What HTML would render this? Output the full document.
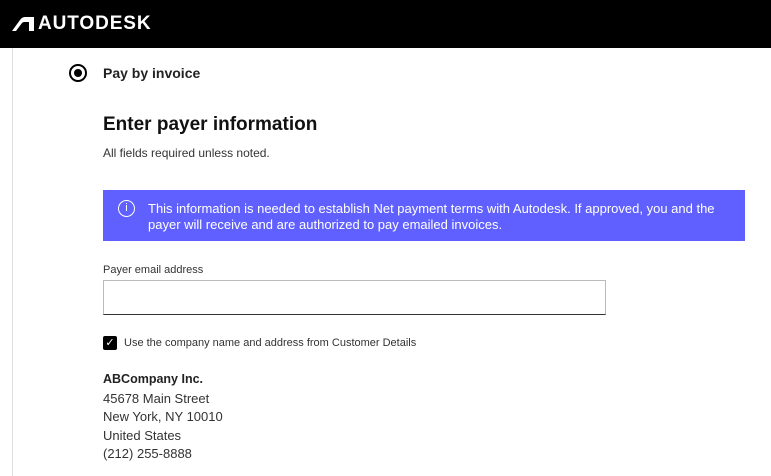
<!DOCTYPE html>
<html><head><style>
body{margin:0;width:771px;height:476px;overflow:hidden;background:#fff;font-family:"Liberation Sans",sans-serif;color:#000;position:relative}
.hdr{position:absolute;left:0;top:0;width:771px;height:48px;background:#000}
.logo{position:absolute;left:38px;top:13px;color:#fff;font-weight:bold;font-size:19px;letter-spacing:0.9px}
.vline{position:absolute;left:12px;top:48px;width:1px;height:428px;background:#ddd}
.t{position:absolute;white-space:nowrap}
</style></head><body>
<div class="hdr"><svg style="position:absolute;left:12px;top:17px" width="22" height="14" viewBox="0 0 22 14"><path d="M0 14 L8 3 Q10 0 13 0 L22 0 L22 14 L17 14 L17 5 L12 5 Q11 5 10 6 L4 14 Z" fill="#fff"/></svg><div class="logo">AUTODESK</div></div>
<div class="vline"></div>
<div style="position:absolute;left:69px;top:64px;width:14px;height:14px;border:2px solid #000;border-radius:50%;box-sizing:content-box"></div>
<div style="position:absolute;left:74px;top:69px;width:8px;height:8px;background:#000;border-radius:50%"></div>
<div class="t" style="left:103px;top:65px;font-size:14px;font-weight:bold;color:#222">Pay by invoice</div>
<div class="t" style="left:103px;top:114px;font-size:19px;font-weight:bold;color:#111">Enter payer information</div>
<div class="t" style="left:103px;top:146px;font-size:12px;color:#333">All fields required unless noted.</div>
<div style="position:absolute;left:103px;top:190px;width:642px;height:51px;background:#5f60ff"></div>
<div style="position:absolute;left:118px;top:200px;width:15px;height:15px;border:1.5px solid #fff;border-radius:50%;color:#fff;font-size:11px;text-align:center;line-height:15px">i</div>
<div class="t" style="left:148px;top:201px;font-size:13px;color:#fff;line-height:15.5px">This information is needed to establish Net payment terms with Autodesk. If approved, you and the<br>payer will receive and are authorized to pay emailed invoices.</div>
<div class="t" style="left:103px;top:264px;font-size:11px;color:#333">Payer email address</div>
<div style="position:absolute;left:103px;top:280px;width:503px;height:35px;box-sizing:border-box;border:1px solid #bbb;border-bottom:1.5px solid #333"></div>
<div style="position:absolute;left:103px;top:336px;width:14px;height:14px;background:#000;border-radius:2px;color:#fff;font-size:11px;line-height:14px;text-align:center">✓</div>
<div class="t" style="left:124px;top:337px;font-size:11px;color:#333">Use the company name and address from Customer Details</div>
<div class="t" style="left:103px;top:372px;font-size:12.5px;font-weight:bold;color:#222">ABCompany Inc.</div>
<div class="t" style="left:103px;top:390px;font-size:13px;color:#333;line-height:18.3px">45678 Main Street<br>New York, NY 10010<br>United States<br>(212) 255-8888</div>
</body></html>
